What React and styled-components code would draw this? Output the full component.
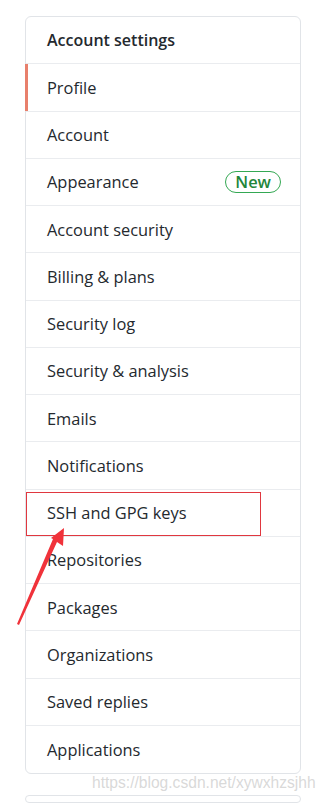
import React from "react";
import styled, { createGlobalStyle } from "styled-components";

const Global = createGlobalStyle`
  html, body { margin: 0; padding: 0; background: #fff; }
  body { font-family: "Open Sans", "Noto Sans", sans-serif; color: #24292e; }
`;

const Page = styled.div`
  position: relative;
  width: 328px;
  height: 803px;
  overflow: hidden;
  padding: 16px 0 0 25px;
  box-sizing: border-box;
  display: flex;
  flex-direction: column;
  gap: 21px;
`;

const Card = styled.nav`
  width: 276px;
  border: 1px solid #e1e4e8;
  border-radius: 6px;
  box-sizing: border-box;
  display: flex;
  flex-direction: column;
  background: #fff;
`;

const Header = styled.div`
  height: 47.25px;
  display: flex;
  align-items: center;
  padding-left: 21px;
  font-size: 16px;
  font-weight: 600;
  border-bottom: 1px solid #eaecef;
  box-sizing: border-box;
`;

const Item = styled.a`
  position: relative;
  height: 47.25px;
  display: flex;
  align-items: center;
  justify-content: space-between;
  padding: 0 19px 0 21px;
  font-size: 16.4px;
  color: #24292e;
  border-bottom: ${(p) => (p.$last ? "none" : "1px solid #eaecef")};
  box-sizing: border-box;
  &::before {
    content: "";
    display: ${(p) => (p.$selected ? "block" : "none")};
    position: absolute;
    left: -1px;
    top: 0;
    bottom: 0;
    width: 3px;
    background: #e8806c;
  }
`;

const Badge = styled.span`
  font-size: 16.4px;
  font-weight: 600;
  color: #22863a;
  border: 1px solid #34a853;
  border-radius: 12px;
  padding: 0 9px;
  line-height: 20px;
`;

const NextCard = styled.div`
  width: 276px;
  height: 40px;
  border: 1px solid #e1e4e8;
  border-radius: 6px;
  box-sizing: border-box;
`;

const Watermark = styled.div`
  position: absolute;
  left: 92px;
  top: 774px;
  font-family: "Liberation Sans", Arial, sans-serif;
  font-size: 15.6px;
  color: rgba(200, 200, 200, 0.7);
`;

const Highlight = styled.div`
  position: absolute;
  left: 26px;
  top: 492px;
  width: 235px;
  height: 44px;
  border: 1px solid #e0373f;
  box-sizing: border-box;
`;

const Arrow = styled.svg`
  position: absolute;
  left: 0;
  top: 500px;
`;

const items = [
  "Profile",
  "Account",
  "Appearance",
  "Account security",
  "Billing & plans",
  "Security log",
  "Security & analysis",
  "Emails",
  "Notifications",
  "SSH and GPG keys",
  "Repositories",
  "Packages",
  "Organizations",
  "Saved replies",
  "Applications",
];

export default function App() {
  return (
    <>
      <Global />
      <Page>
        <Card>
          <Header>Account settings</Header>
          {items.map((t, i) => (
            <Item key={t} $selected={i === 0} $last={i === items.length - 1}>
              <span>{t}</span>
              {t === "Appearance" && <Badge>New</Badge>}
            </Item>
          ))}
        </Card>
        <NextCard />
        <Watermark>https://blog.csdn.net/xywxhzsjhh</Watermark>
        <Highlight />
        <Arrow width="80" height="130" viewBox="0 0 80 130">
          <polygon points="64,28 63,46 57,42 19,125 17,124 53,39 51,38" fill="#f0323a" />
        </Arrow>
      </Page>
    </>
  );
}
